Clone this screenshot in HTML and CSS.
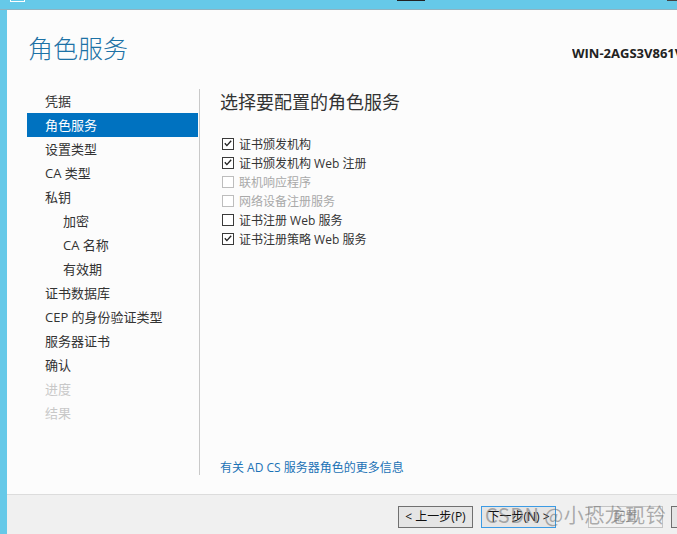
FILE: index.html
```html
<!DOCTYPE html>
<html lang="zh-CN">
<head>
<meta charset="utf-8">
<title>角色服务</title>
<link rel="stylesheet" href="styles.css">
</head>
<body>
<div class="frame">
  <div class="topbar">
    <span class="app-icon"></span>
    <span class="win-title"></span>
    <span class="win-ctrl"></span>
  </div>
  <div class="window">
    <header class="header">
      <h1 class="title">角色服务</h1>
      <div class="server">WIN-2AGS3V861V</div>
    </header>
    <div class="main">
      <nav class="nav">
        <div class="nav-item">凭据</div>
        <div class="nav-item active">角色服务</div>
        <div class="nav-item">设置类型</div>
        <div class="nav-item">CA 类型</div>
        <div class="nav-item">私钥</div>
        <div class="nav-item sub">加密</div>
        <div class="nav-item sub">CA 名称</div>
        <div class="nav-item sub">有效期</div>
        <div class="nav-item">证书数据库</div>
        <div class="nav-item">CEP 的身份验证类型</div>
        <div class="nav-item">服务器证书</div>
        <div class="nav-item">确认</div>
        <div class="nav-item disabled">进度</div>
        <div class="nav-item disabled">结果</div>
      </nav>
      <section class="content">
        <h2 class="heading">选择要配置的角色服务</h2>
        <ul class="checks">
          <li class="check"><span class="box"><svg viewBox="0 0 11 11" width="11" height="11"><path d="M2 5.2 L4.3 7.8 L9 2.4" fill="none" stroke="#222" stroke-width="1.5"/></svg></span>证书颁发机构</li>
          <li class="check"><span class="box"><svg viewBox="0 0 11 11" width="11" height="11"><path d="M2 5.2 L4.3 7.8 L9 2.4" fill="none" stroke="#222" stroke-width="1.5"/></svg></span>证书颁发机构 Web 注册</li>
          <li class="check off"><span class="box"></span>联机响应程序</li>
          <li class="check off"><span class="box"></span>网络设备注册服务</li>
          <li class="check"><span class="box"></span>证书注册 Web 服务</li>
          <li class="check"><span class="box"><svg viewBox="0 0 11 11" width="11" height="11"><path d="M2 5.2 L4.3 7.8 L9 2.4" fill="none" stroke="#222" stroke-width="1.5"/></svg></span>证书注册策略 Web 服务</li>
        </ul>
        <a class="more" href="#">有关 AD CS 服务器角色的更多信息</a>
      </section>
    </div>
    <footer class="footer">
      <button class="btn">&lt; 上一步(P)</button>
      <button class="btn default">下一步(N) &gt;</button>
      <button class="btn dis gap">配置</button>
      <button class="btn edge"></button>
      <div class="watermark">CSDN @小恐龙现铃</div>
    </footer>
  </div>
</div>
</body>
</html>
```
FILE: styles.css
```css
* { box-sizing: border-box; }
html, body { margin: 0; padding: 0; }
body {
  width: 677px;
  height: 534px;
  overflow: hidden;
  background: #66c9e8;
  font-family: "Open Sans", "Noto Sans CJK SC", sans-serif;
}
.frame {
  display: flex;
  flex-direction: column;
  height: 534px;
}
.topbar {
  height: 10px;
  display: flex;
  align-items: flex-start;
  border-bottom: 1px solid #8fb3c0;
}
.app-icon {
  margin-left: 10px;
  width: 15px;
  height: 2px;
  border: 1px solid #fff;
  border-top: none;
}
.win-title {
  margin-left: 372px;
  width: 28px;
  height: 1px;
  background: #222;
}
.win-ctrl {
  margin-left: auto;
  width: 10px;
  height: 1px;
  background: #444;
}
.window {
  flex: 1;
  margin-left: 7px;
  background: #fcfcfc;
  display: flex;
  flex-direction: column;
  overflow: hidden;
}
.header {
  height: 79px;
  display: flex;
  align-items: flex-start;
}
.title {
  margin: 0;
  padding: 22px 0 0 21px;
  font-family: "Noto Sans CJK SC", sans-serif;
  font-size: 25px;
  line-height: 30px;
  font-weight: 300;
  color: #1d72a6;
}
.server {
  margin-left: auto;
  margin-top: 35px;
  width: 105px;
  overflow: hidden;
  white-space: nowrap;
  font-family: "Open Sans", "Noto Sans", sans-serif;
  font-weight: 700;
  font-size: 13px;
  line-height: 16px;
  color: #222;
}
.main {
  height: 386px;
  display: flex;
  padding-left: 20px;
}
.nav {
  width: 171px;
  margin-right: 1px;
}
.nav-item {
  height: 24px;
  line-height: 24px;
  padding-left: 18px;
  font-size: 13px;
  color: #333;
  white-space: nowrap;
}
.nav-item.sub { padding-left: 36px; }
.nav-item.active { background: #0072c0; color: #fff; }
.nav-item.disabled { color: #c8c8c8; }
.content {
  flex: 1;
  border-left: 1px solid #c9c9c9;
  padding-left: 20px;
  display: flex;
  flex-direction: column;
}
.heading {
  margin: 0;
  font-family: "Noto Sans CJK SC", sans-serif;
  font-size: 18px;
  line-height: 24px;
  font-weight: 400;
  color: #333;
}
.checks {
  list-style: none;
  margin: 21px 0 0 0;
  padding: 0;
}
.check {
  height: 19px;
  display: flex;
  align-items: center;
  font-size: 12px;
  color: #333;
  white-space: nowrap;
}
.box {
  width: 12px;
  height: 12px;
  margin-left: 2px;
  margin-right: 5px;
  border: 1px solid #3a3a3a;
  background: #fff;
  display: flex;
  align-items: center;
  justify-content: center;
}
.box svg { display: block; }
.check.off { color: #a9a9a9; }
.check.off .box { border-color: #bdbdbd; }
.more {
  margin-top: auto;
  font-size: 12px;
  line-height: 14px;
  color: #1b72b6;
  text-decoration: none;
  white-space: nowrap;
}
.footer {
  margin-top: auto;
  height: 40px;
  border-top: 1px solid #dcdcdc;
  background: #f0f0f0;
  display: flex;
  align-items: flex-start;
  padding: 11px 0 0 391px;
  position: relative;
}
.btn {
  flex-shrink: 0;
  width: 75px;
  height: 22px;
  margin: 0 8px 0 0;
  padding: 0;
  border: 1px solid #707070;
  background: #e5e5e5;
  font-family: "Open Sans", "Noto Sans CJK SC", sans-serif;
  font-size: 12px;
  color: #111;
  line-height: 18px;
}
.btn.default { border-color: #3c9be4; }
.btn.gap { margin-left: 24px; }
.btn.dis { border-color: #c4c4c4; background: #f2f2f2; color: #a0a0a0; }
.watermark {
  position: absolute;
  left: 478px;
  top: 5px;
  font-family: "Noto Sans CJK SC", sans-serif;
  font-size: 20px;
  line-height: 30px;
  color: rgba(100, 100, 100, 0.5);
  white-space: nowrap;
  letter-spacing: 0.5px;
}
```
